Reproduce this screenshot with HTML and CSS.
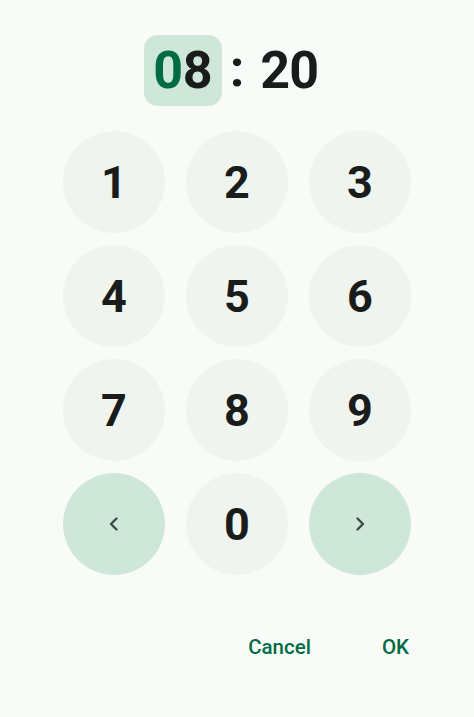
FILE: index.html
```html
<!DOCTYPE html>
<html>
<head>
<meta charset="utf-8">
<link rel="stylesheet" href="styles.css">
</head>
<body>
<div class="dialog">
  <div class="time">
    <div class="left"><span class="hours"><span class="active">0</span>8</span></div>
    <div class="colon">:</div>
    <div class="right"><span class="minutes">20</span></div>
  </div>
  <div class="keypad">
    <button class="key">1</button>
    <button class="key">2</button>
    <button class="key">3</button>
    <button class="key">4</button>
    <button class="key">5</button>
    <button class="key">6</button>
    <button class="key">7</button>
    <button class="key">8</button>
    <button class="key">9</button>
    <button class="key nav"><svg width="14" height="18" viewBox="0 0 14 18"><path d="M9.5 3.5 L4 9 L9.5 14.5" fill="none" stroke="#3e4a43" stroke-width="2.4" stroke-linecap="round" stroke-linejoin="round"/></svg></button>
    <button class="key">0</button>
    <button class="key nav"><svg width="14" height="18" viewBox="0 0 14 18"><path d="M4.5 3.5 L10 9 L4.5 14.5" fill="none" stroke="#3e4a43" stroke-width="2.4" stroke-linecap="round" stroke-linejoin="round"/></svg></button>
  </div>
  <div class="actions">
    <button class="text-btn">Cancel</button>
    <button class="text-btn">OK</button>
  </div>
</div>
</body>
</html>
```
FILE: styles.css
```css
html, body {
  margin: 0;
  padding: 0;
  background: #f8fbf7;
}
.dialog {
  width: 474px;
  height: 717px;
  font-family: Roboto, "Noto Sans", sans-serif;
  color: #191c1a;
  box-sizing: border-box;
  padding-top: 35px;
}
.time {
  display: grid;
  grid-template-columns: 1fr auto 1fr;
  align-items: center;
  height: 71px;
  font-size: 52px;
  font-weight: 700;
}
.left { display: flex; justify-content: flex-end; }
.right { display: flex; justify-content: flex-start; }
.hours {
  display: flex;
  align-items: center;
  justify-content: center;
  width: 78px;
  height: 71px;
  border-radius: 14px;
  background: #cfe7d9;
  letter-spacing: -0.5px;
}
.active { color: #006c45; }
.colon {
  padding: 0 8px;
  position: relative;
  top: -2px;
}
.minutes {
  padding-left: 8px;
  letter-spacing: -1px;
}
.keypad {
  margin-top: 25px;
  display: grid;
  grid-template-columns: repeat(3, 102px);
  grid-auto-rows: 102px;
  column-gap: 21px;
  row-gap: 12px;
  justify-content: center;
}
.key {
  border: none;
  border-radius: 50%;
  background: #eff4ef;
  font-family: Roboto, "Noto Sans", sans-serif;
  font-size: 45px;
  font-weight: 700;
  color: #191c1a;
  display: flex;
  align-items: center;
  justify-content: center;
  padding: 0;
}
.key.nav { background: #cfe7d9; }
.actions {
  display: flex;
  justify-content: flex-end;
  gap: 23px;
  padding-right: 41px;
  margin-top: 50px;
}
.text-btn {
  border: none;
  background: none;
  padding: 10px 24px;
  font-family: Roboto, "Noto Sans", sans-serif;
  font-size: 20.5px;
  font-weight: 500;
  color: #006c45;
  line-height: 24px;
}
```
